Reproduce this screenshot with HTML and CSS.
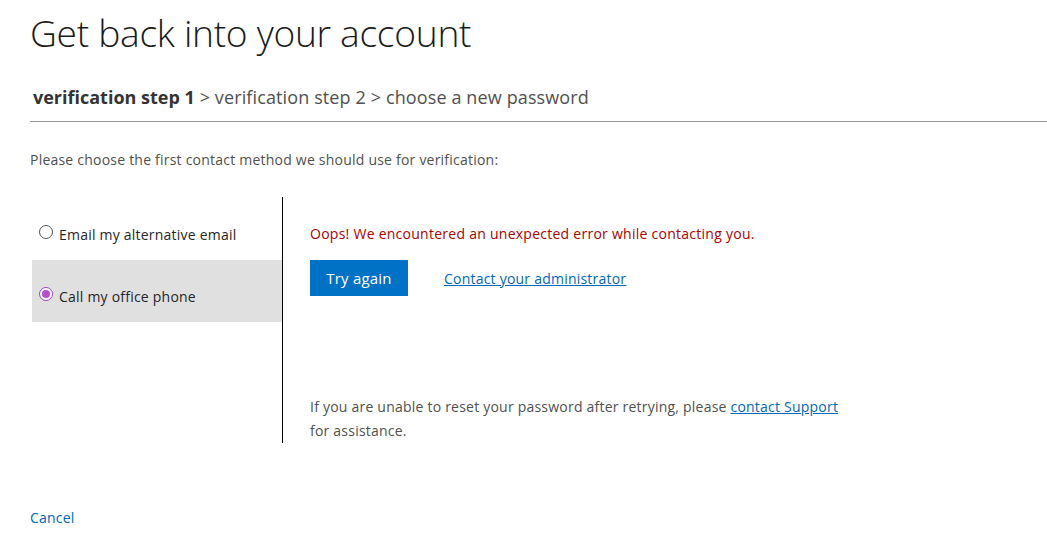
FILE: index.html
```html
<!DOCTYPE html>
<html lang="en">
<head>
<meta charset="utf-8">
<title>Get back into your account</title>
<link rel="stylesheet" href="styles.css">
</head>
<body>
<main class="page">
  <h1 class="title">Get back into your account</h1>
  <div class="crumbs"><strong>verification step 1</strong> &gt; verification step 2 &gt; choose a new password</div>
  <hr class="rule">
  <p class="intro">Please choose the first contact method we should use for verification:</p>
  <div class="panel">
    <div class="methods">
      <label class="method"><span class="radio"></span>Email my alternative email</label>
      <label class="method selected"><span class="radio checked"></span>Call my office phone</label>
    </div>
    <div class="detail">
      <p class="error">Oops! We encountered an unexpected error while contacting you.</p>
      <div class="actions">
        <button class="btn">Try again</button>
        <a class="link" href="#">Contact your administrator</a>
      </div>
      <p class="help">If you are unable to reset your password after retrying, please <a class="link" href="#">contact Support</a><br>for assistance.</p>
    </div>
  </div>
  <a class="cancel" href="#">Cancel</a>
</main>
</body>
</html>
```

FILE: styles.css
```css
html, body {
  margin: 0;
  padding: 0;
  background: #fff;
}
body {
  font-family: "Open Sans", "Noto Sans", sans-serif;
  color: #505050;
  letter-spacing: 0.22px;
}
.page {
  padding: 0 0 0 30px;
  display: flex;
  flex-direction: column;
  align-items: flex-start;
}
.title {
  margin: 8px 0 0 0;
  font-weight: 300;
  font-size: 37.2px;
  line-height: 50px;
  color: #1b1b1b;
  letter-spacing: -0.3px;
}
.crumbs {
  margin: 27px 0 0 3px;
  font-size: 18px;
  line-height: 24px;
  color: #505050;
  letter-spacing: 0.12px;
}
.crumbs strong {
  color: #333;
  font-weight: 700;
  letter-spacing: 0;
}
.rule {
  align-self: stretch;
  margin: 12px 0 0 0;
  border: 0;
  border-top: 1px solid #999;
  height: 0;
}
.intro {
  margin: 28px 0 0 0;
  font-size: 14px;
  line-height: 20px;
  color: #505050;
}
.panel {
  margin-top: 27px;
  display: flex;
}
.methods {
  width: 251px;
  margin-left: 2px;
  padding-top: 1px;
  border-right: 1px solid #000;
  height: 246px;
  box-sizing: border-box;
}
.method {
  display: flex;
  align-items: center;
  height: 62px;
  padding: 11px 0 0 7px;
  box-sizing: border-box;
  font-size: 14px;
  color: #262626;
}
.method.selected {
  background: #e0e0e0;
}
.radio {
  width: 12px;
  height: 12px;
  border: 1px solid #555;
  border-radius: 50%;
  background: #fff;
  margin-right: 6px;
  margin-top: -5px;
  box-sizing: content-box;
  position: relative;
}
.radio.checked {
  border-color: #a53ec2;
}
.radio.checked::after {
  content: "";
  position: absolute;
  left: 2px;
  top: 2px;
  width: 8px;
  height: 8px;
  border-radius: 50%;
  background: #b34fd0;
}
.detail {
  padding: 27px 0 0 27px;
  display: flex;
  flex-direction: column;
  align-items: flex-start;
}
.error {
  margin: 0;
  font-size: 14px;
  line-height: 20px;
  color: #a80000;
  letter-spacing: 0.26px;
}
.actions {
  margin-top: 16px;
  display: flex;
  align-items: center;
  gap: 36px;
}
.btn {
  width: 98px;
  height: 36px;
  border: 0;
  background: #0072c6;
  color: #fff;
  font-family: inherit;
  font-size: 15px;
  letter-spacing: 0.2px;
  padding: 0;
}
.link {
  color: #0067b8;
  font-size: 14px;
  text-decoration: underline;
}
.help {
  margin: 99px 0 0 0;
  font-size: 14px;
  line-height: 24px;
  color: #505050;
  letter-spacing: 0.22px;
}
.help .link {
  font-size: inherit;
}
.cancel {
  margin-top: 65px;
  font-size: 14px;
  line-height: 20px;
  color: #0067b8;
  text-decoration: none;
}
```
